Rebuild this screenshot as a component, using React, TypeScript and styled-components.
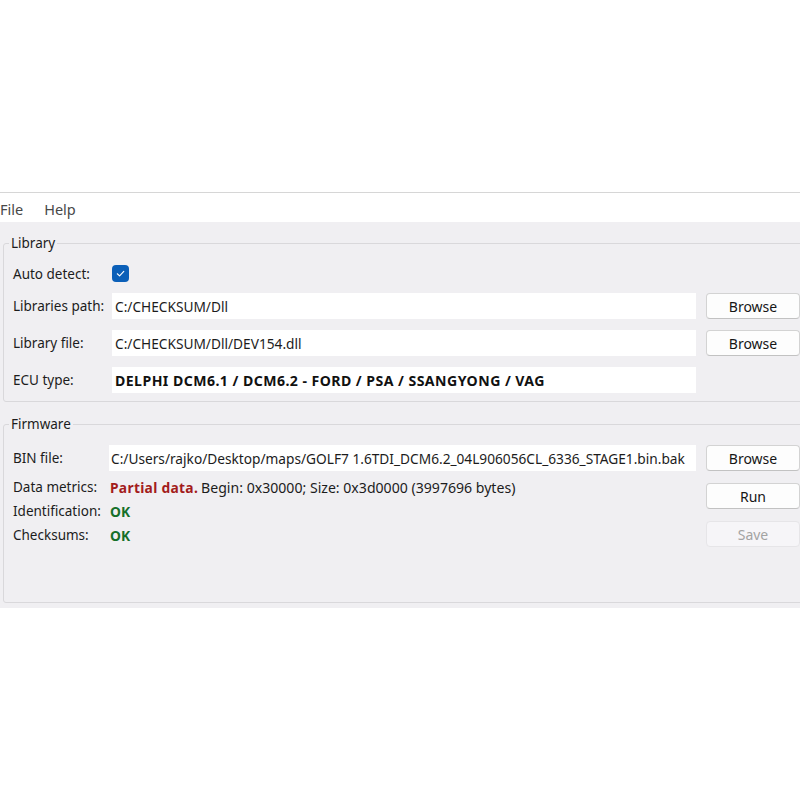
import React from "react";
import styled, { createGlobalStyle } from "styled-components";

const GlobalStyle = createGlobalStyle`
  html, body {
    margin: 0;
    padding: 0;
    background: #ffffff;
    overflow: hidden;
  }
  body {
    font-family: "Noto Sans", "Open Sans", sans-serif;
    font-size: 13.3px;
    color: #1c1c1c;
  }
`;

const Page = styled.div`
  padding-top: 192px;
  width: 800px;
`;

const Window = styled.div`
  border-top: 1px solid #d6d6d6;
`;

const MenuBar = styled.div`
  height: 29px;
  box-sizing: border-box;
  padding-top: 3px;
  background: #ffffff;
  display: flex;
  align-items: center;
  gap: 21px;
  color: #484848;
  font-size: 14.5px;
`;

const MenuItem = styled.span`
  line-height: 26px;
`;

const Body = styled.div`
  background: #f0eff2;
  padding: 12px 0 5px 3px;
  display: flex;
  flex-direction: column;
  gap: 13px;
`;

const GroupBox = styled.fieldset<{ $padBottom: number }>`
  margin: 0 -10px 0 0;
  border: 1px solid #d9d8db;
  border-radius: 3px;
  padding: 0 9px ${(p) => p.$padBottom}px 9px;
  min-width: 0;
`;

const Legend = styled.legend`
  margin-left: -4px;
  padding: 0 2px;
  line-height: 18px;
  font-size: 13.5px;
  color: #1c1c1c;
`;

const LibraryGrid = styled.div`
  display: grid;
  grid-template-columns: 89px 1fr 94px;
  grid-template-rows: 17px 26px 26px 26px;
  column-gap: 10px;
  row-gap: 11px;
  padding-top: 13px;
  align-items: center;
`;

const Label = styled.span`
  white-space: nowrap;
  line-height: 18px;
  font-size: 13.5px;
`;

const Field = styled.div<{ $bold?: boolean; $pad?: number }>`
  height: 26px;
  background: #ffffff;
  display: flex;
  align-items: center;
  padding-left: ${(p) => p.$pad ?? 3}px;
  white-space: nowrap;
  overflow: hidden;
  font-size: ${(p) => (p.$bold ? "14.1px" : "13.7px")};
  font-weight: ${(p) => (p.$bold ? 700 : 400)};
  letter-spacing: ${(p) => (p.$bold ? "0.45px" : "0")};
  color: ${(p) => (p.$bold ? "#111111" : "#1c1c1c")};
`;

const Button = styled.button<{ $disabled?: boolean }>`
  height: 26px;
  width: 94px;
  box-sizing: border-box;
  font-family: inherit;
  font-size: 14px;
  border-radius: 4px;
  border: 1px solid ${(p) => (p.$disabled ? "#e6e5e8" : "#d3d3d3")};
  border-bottom-color: ${(p) => (p.$disabled ? "#e6e5e8" : "#c2c2c2")};
  background: ${(p) => (p.$disabled ? "#f6f5f8" : "#fdfdfd")};
  color: ${(p) => (p.$disabled ? "#a3a3a3" : "#161616")};
  padding: 0;
  cursor: default;
`;

const Check = styled.span`
  width: 17px;
  height: 17px;
  border-radius: 4px;
  background: #0b5fb8;
  display: flex;
  align-items: center;
  justify-content: center;
`;

const FirmwareLayout = styled.div`
  display: grid;
  grid-template-columns: 1fr 94px;
  column-gap: 10px;
  padding-top: 12px;
`;

const LeftColumn = styled.div`
  display: flex;
  flex-direction: column;
  min-width: 0;
`;

const BinRow = styled.div`
  display: grid;
  grid-template-columns: 86px 1fr;
  column-gap: 10px;
  align-items: center;
  margin-bottom: 4px;
`;

const InfoRow = styled.div`
  display: grid;
  grid-template-columns: 86px 1fr;
  column-gap: 11px;
  height: 24px;
  align-items: center;
  white-space: nowrap;
`;

const InfoValue = styled.span`
  font-size: 14.1px;
`;

const Status = styled.span<{ $tone: "bad" | "good" }>`
  font-weight: 700;
  font-size: 13.8px;
  letter-spacing: ${(p) => (p.$tone === "bad" ? "0.3px" : "0.2px")};
  color: ${(p) => (p.$tone === "bad" ? "#a31c1c" : "#16702a")};
  margin-right: 3px;
`;

const ButtonColumn = styled.div`
  display: flex;
  flex-direction: column;
  gap: 12px;
`;

export default function App() {
  return (
    <>
      <GlobalStyle />
      <Page>
        <Window>
          <MenuBar>
            <MenuItem>File</MenuItem>
            <MenuItem>Help</MenuItem>
          </MenuBar>
          <Body>
            <GroupBox $padBottom={8}>
              <Legend>Library</Legend>
              <LibraryGrid>
                <Label>Auto detect:</Label>
                <Check>
                  <svg width="11" height="11" viewBox="0 0 12 12" fill="none">
                    <path d="M2.5 6.3 L5 8.6 L9.6 3.6" stroke="#ffffff" strokeWidth="1.2" strokeLinecap="round" strokeLinejoin="round" />
                  </svg>
                </Check>
                <span />
                <Label>Libraries path:</Label>
                <Field>C:/CHECKSUM/Dll</Field>
                <Button>Browse</Button>
                <Label>Library file:</Label>
                <Field>C:/CHECKSUM/Dll/DEV154.dll</Field>
                <Button>Browse</Button>
                <Label>ECU type:</Label>
                <Field $bold>DELPHI DCM6.1 / DCM6.2 - FORD / PSA / SSANGYONG / VAG</Field>
                <span />
              </LibraryGrid>
            </GroupBox>
            <GroupBox $padBottom={55}>
              <Legend>Firmware</Legend>
              <FirmwareLayout>
                <LeftColumn>
                  <BinRow>
                    <Label>BIN file:</Label>
                    <Field $pad={2}>C:/Users/rajko/Desktop/maps/GOLF7 1.6TDI_DCM6.2_04L906056CL_6336_STAGE1.bin.bak</Field>
                  </BinRow>
                  <InfoRow>
                    <Label>Data metrics:</Label>
                    <InfoValue>
                      <Status $tone="bad">Partial data.</Status>
                      Begin: 0x30000; Size: 0x3d0000 (3997696 bytes)
                    </InfoValue>
                  </InfoRow>
                  <InfoRow>
                    <Label>Identification:</Label>
                    <InfoValue>
                      <Status $tone="good">OK</Status>
                    </InfoValue>
                  </InfoRow>
                  <InfoRow>
                    <Label>Checksums:</Label>
                    <InfoValue>
                      <Status $tone="good">OK</Status>
                    </InfoValue>
                  </InfoRow>
                </LeftColumn>
                <ButtonColumn>
                  <Button>Browse</Button>
                  <Button>Run</Button>
                  <Button $disabled disabled>Save</Button>
                </ButtonColumn>
              </FirmwareLayout>
            </GroupBox>
          </Body>
        </Window>
      </Page>
    </>
  );
}
